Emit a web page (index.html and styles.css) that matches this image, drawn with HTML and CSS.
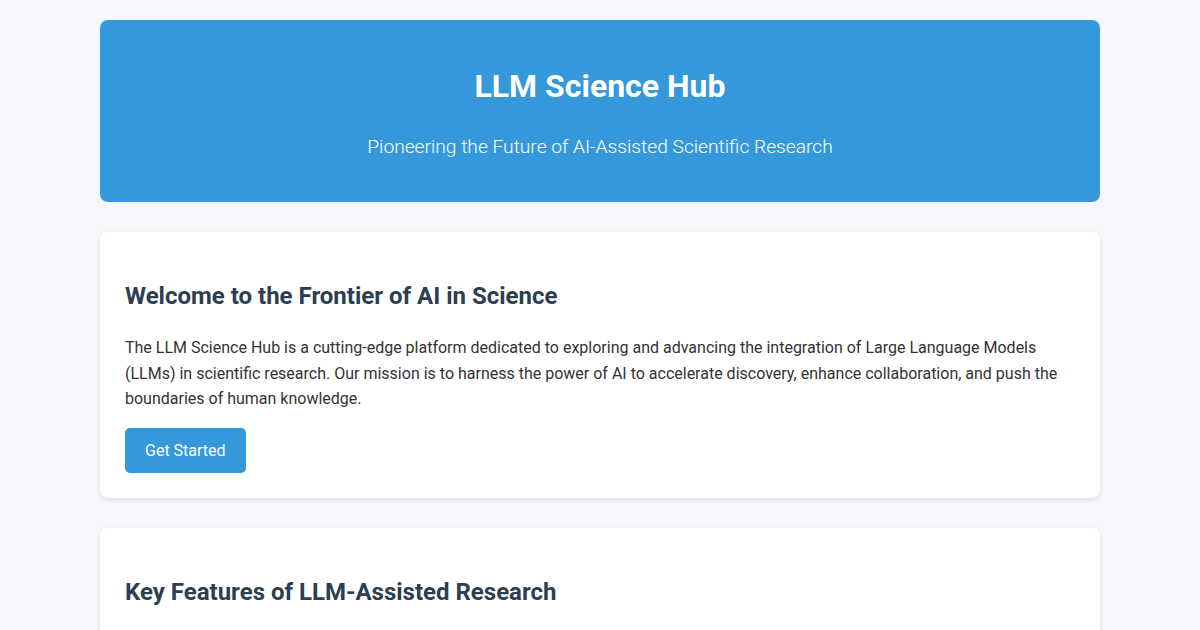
FILE: index.html
```html
<!DOCTYPE html>
<html lang="en">
<head>
<meta charset="utf-8">
<title>LLM Science Hub</title>
<link rel="stylesheet" href="styles.css">
</head>
<body>
<div class="container">
  <header class="hero">
    <h1 class="hero-title">LLM Science Hub</h1>
    <p class="hero-sub">Pioneering the Future of AI-Assisted Scientific Research</p>
  </header>
  <section class="card">
    <h2 class="card-title">Welcome to the Frontier of AI in Science</h2>
    <p class="card-text">The LLM Science Hub is a cutting-edge platform dedicated to exploring and advancing the integration of Large Language Models (LLMs) in scientific research. Our mission is to harness the power of AI to accelerate discovery, enhance collaboration, and push the boundaries of human knowledge.</p>
    <a class="btn" href="#">Get Started</a>
  </section>
  <section class="card">
    <h2 class="card-title">Key Features of LLM-Assisted Research</h2>
  </section>
</div>
</body>
</html>
```
FILE: styles.css
```css
* { box-sizing: border-box; }
html, body { margin: 0; padding: 0; }
body {
  background: #f5f7fa;
  font-family: Roboto, "Liberation Sans", Arial, sans-serif;
  color: #333;
  line-height: 1.6;
  font-size: 16px;
}
.container {
  max-width: 1000px;
  margin: 0 auto;
  padding: 20px 0;
}
.hero {
  background: #3498db;
  color: #fff;
  text-align: center;
  border-radius: 8px;
  padding: 41px 20px 39px;
  margin-bottom: 30px;
}
.hero-title {
  margin: 0 0 20px;
  font-size: 32px;
  font-weight: 700;
  line-height: 1.6;
}
.hero-sub {
  margin: 0;
  font-size: 19.2px;
  font-weight: 300;
  line-height: 1.6;
}
.card {
  background: #fff;
  border-radius: 8px;
  box-shadow: 0 2px 5px rgba(0, 0, 0, 0.1);
  padding: 25px;
  margin-bottom: 30px;
}
.card-title {
  color: #2c3e50;
  font-size: 24px;
  font-weight: 700;
  margin: 20px 0;
  line-height: 1.6;
}
.card-text {
  margin: 0 0 16px;
}
.btn {
  display: inline-block;
  background: #3498db;
  color: #fff;
  text-decoration: none;
  padding: 10px 20px;
  border-radius: 5px;
  font-size: 16px;
  line-height: 25px;
  vertical-align: top;
}
```
